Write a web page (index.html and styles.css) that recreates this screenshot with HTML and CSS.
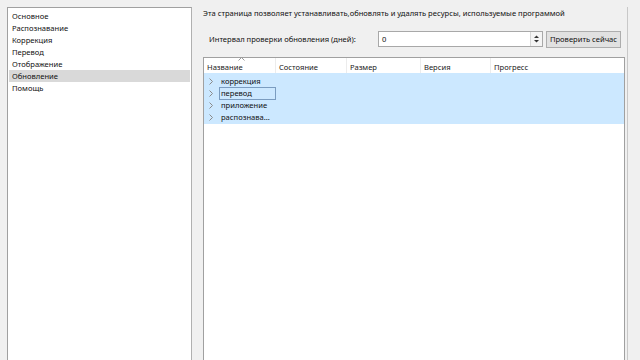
FILE: index.html
```html
<!DOCTYPE html>
<html>
<head>
  <meta charset="utf-8">
  <link rel="stylesheet" href="styles.css">
</head>
<body>
  <div class="window">
    <ul class="nav-list">
      <li>Основное</li>
      <li>Распознавание</li>
      <li>Коррекция</li>
      <li>Перевод</li>
      <li>Отображение</li>
      <li class="selected">Обновление</li>
      <li>Помощь</li>
    </ul>

    <div class="page">
      <div class="intro">Эта страница позволяет устанавливать,обновлять и удалять ресурсы, используемые программой</div>

      <div class="interval-row">
        <span class="interval-label">Интервал проверки обновления (дней):</span>
        <div class="spin-box">
          <span class="spin-value">0</span>
          <span class="spin-buttons">
            <svg width="7" height="10" viewBox="0 0 7 10">
              <path d="M1 4L3.5 1.5L6 4Z" fill="#333"/>
              <path d="M1 6L3.5 8.5L6 6Z" fill="#333"/>
            </svg>
          </span>
        </div>
        <button class="check-button">Проверить сейчас</button>
      </div>

      <div class="tree">
        <div class="tree-header">
          <div class="col">Название<span class="sort-mark">
            <svg width="7" height="4" viewBox="0 0 7 4"><path d="M0.5 3.5L3.5 0.5L6.5 3.5" stroke="#999" fill="none"/></svg>
          </span></div>
          <div class="col">Состояние</div>
          <div class="col">Размер</div>
          <div class="col">Версия</div>
          <div class="col col-last">Прогресс</div>
        </div>
        <div class="tree-body">
          <div class="tree-row"><svg class="chevron" width="4" height="7" viewBox="0 0 4 7"><path d="M0.5 0.5L3.5 3.5L0.5 6.5" stroke="#8a8a8a" fill="none"/></svg><span class="cell">коррекция</span></div>
          <div class="tree-row"><svg class="chevron" width="4" height="7" viewBox="0 0 4 7"><path d="M0.5 0.5L3.5 3.5L0.5 6.5" stroke="#8a8a8a" fill="none"/></svg><span class="cell focused">перевод</span></div>
          <div class="tree-row"><svg class="chevron" width="4" height="7" viewBox="0 0 4 7"><path d="M0.5 0.5L3.5 3.5L0.5 6.5" stroke="#8a8a8a" fill="none"/></svg><span class="cell">приложение</span></div>
          <div class="tree-row"><svg class="chevron" width="4" height="7" viewBox="0 0 4 7"><path d="M0.5 0.5L3.5 3.5L0.5 6.5" stroke="#8a8a8a" fill="none"/></svg><span class="cell">распознава...</span></div>
        </div>
      </div>
    </div>

    <div class="edge"></div>
  </div>
</body>
</html>
```

FILE: styles.css
```css
html, body {
  margin: 0;
  height: 100%;
}

body {
  background: #f0f0f0;
  font-family: "Noto Sans", "DejaVu Sans", sans-serif;
  font-size: 7.6px;
  color: #111;
  overflow: hidden;
}

.window {
  display: flex;
  height: 100%;
  padding: 7px 0 0 7px;
  box-sizing: border-box;
}

.nav-list {
  list-style: none;
  flex: none;
  margin: 0;
  padding: 2px 1px 0 1px;
  width: 181px;
  height: 400px;
  background: #fff;
  border: 1px solid #a0a0a0;
  border-right-color: #b0b0b0;
}

.nav-list li {
  height: 12px;
  line-height: 12px;
  padding-left: 3px;
}

.nav-list li.selected {
  background: #d9d9d9;
}

.page {
  display: flex;
  flex-direction: column;
  flex: none;
  margin-left: 11px;
  width: 422px;
}

.intro {
  height: 12px;
  line-height: 12px;
}

.interval-row {
  display: flex;
  align-items: center;
  margin-top: 11px;
  height: 18px;
}

.interval-label {
  flex: none;
  width: 175px;
  padding-left: 6px;
  box-sizing: border-box;
  white-space: nowrap;
}

.spin-box {
  display: flex;
  flex: none;
  align-items: center;
  width: 163px;
  height: 14px;
  background: #fff;
  border: 1px solid #a8a8a8;
}

.spin-value {
  flex: 1;
  padding-left: 3px;
}

.spin-buttons {
  display: flex;
  align-items: center;
  justify-content: center;
  width: 11px;
  height: 14px;
  border-left: 1px solid #d6d6d6;
  background: #f4f4f4;
}

.check-button {
  flex: none;
  margin-left: 3px;
  width: 75px;
  height: 17px;
  padding: 0;
  font-family: inherit;
  font-size: 7.6px;
  color: #111;
  background: #e1e1e1;
  border: 1px solid #adadad;
}

.tree {
  margin-top: 9px;
  flex: 1;
  background: #fff;
  border: 1px solid #a0a0a0;
  border-bottom: none;
}

.tree-header {
  display: flex;
  height: 15px;
}

.col {
  position: relative;
  line-height: 18px;
  padding-left: 3px;
  border-right: 1px solid #ececec;
  color: #1a1a1a;
  box-sizing: border-box;
}

.tree-header .col:nth-child(1) { width: 72px; }
.tree-header .col:nth-child(2) { width: 71px; }
.tree-header .col:nth-child(3) { width: 74px; }
.tree-header .col:nth-child(4) { width: 70px; }

.col-last {
  flex: 1;
  border-right: none;
}

.sort-mark {
  position: absolute;
  left: 34px;
  top: -1px;
  line-height: 0;
}

.tree-body {
  background: #cce8ff;
  padding: 2px 0 1px;
}

.tree-row {
  display: flex;
  align-items: center;
  height: 12px;
}

.chevron {
  flex: none;
  margin: 0 6px 0 5px;
}

.cell {
  padding: 0 1px;
  line-height: 11px;
  border: 1px solid transparent;
}

.cell.focused {
  width: 53px;
  border-color: #7a9cc0;
}

.edge {
  flex: none;
  width: 1px;
  margin-left: 2px;
  background: #c8c8c8;
}
```
